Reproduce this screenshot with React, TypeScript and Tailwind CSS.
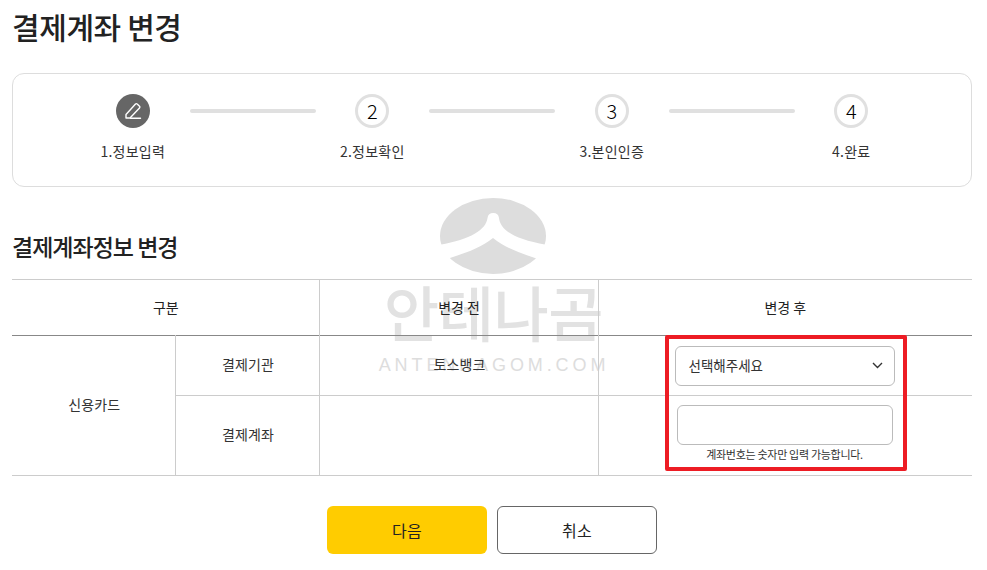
import React from "react";

const steps = [
  { n: "2", label: "2.정보확인" },
  { n: "3", label: "3.본인인증" },
  { n: "4", label: "4.완료" },
];

function Pencil() {
  return (
    <svg width="18" height="18" viewBox="0 0 18 18" fill="none" stroke="#ffffff" strokeWidth="1.4" strokeLinejoin="round" strokeLinecap="round">
      <path d="M2 12.5 L11.5 2 a1.2 1.2 0 0 1 1.7 0 L15.5 4.2 a1.2 1.2 0 0 1 0 1.7 L6 16 L2 16 Z" />
      <path d="M6.5 16.2 L16.5 16.2" />
    </svg>
  );
}

function Circle({ children, active }: { children: React.ReactNode; active?: boolean }) {
  return (
    <div
      className={
        active
          ? "flex h-[34px] w-[34px] items-center justify-center rounded-full bg-[#666666]"
          : "flex h-[34px] w-[34px] items-center justify-center rounded-full border-[3px] border-[#e0e0e0] bg-white text-[20px] font-light leading-none text-[#000000]"
      }
    >
      {children}
    </div>
  );
}

function Step({ circle, label, line }: { circle: React.ReactNode; label: string; line: boolean }) {
  return (
    <div className="relative flex flex-col items-center">
      {circle}
      {line && <div className="absolute left-[176.6px] top-[15px] h-[4px] w-[126px] rounded-full bg-[#e0e0e0]" />}
      <div className="mt-[13px] text-[14px] leading-[20px] tracking-[0.25px] text-[#333333]">{label}</div>
    </div>
  );
}

export default function App() {
  const th = "border-r border-[#cccccc] pb-[1px] pl-[1px] font-normal text-center text-[14px] text-[#222222]";
  const td = "border-r border-[#cccccc] pb-[2px] pl-[2px] text-center text-[14px] tracking-[0.1px] text-[#333333]";
  return (
    <div
      className="relative h-[570px] w-[987px] overflow-hidden bg-white"
      style={{ fontFamily: '"Noto Sans CJK KR", "Noto Sans", sans-serif' }}
    >
      <div className="absolute left-[378px] top-[198px] flex w-[230px] flex-col items-center">
        <svg width="106" height="76" viewBox="0 0 106 76">
          <ellipse cx="53" cy="38" rx="53" ry="38" fill="#dddddd" />
          <path
            d="M47.5 20 a5.8 5.8 0 0 1 11.5 0 C60 32 75 42 108 47 L108 66 L95 60 C80 55 65 50 53 40 C41 50 25 55 10 60 L-2 66 L-2 47 C30 42 46 32 47.5 20 Z"
            fill="#ffffff"
          />
        </svg>
        <div className="-mt-[1px] ml-[1px] whitespace-nowrap text-[60px] font-medium leading-[76px] tracking-[-0.5px] text-[#e2e2e2]">안테나곰</div>
        <div
          className="ml-[2px] mt-[6px] whitespace-nowrap text-[18px] leading-[20px] tracking-[3.9px] text-[#dddddd]"
          style={{ fontFamily: '"Liberation Sans", sans-serif' }}
        >
          ANTENNAGOM.COM
        </div>
      </div>

      <div className="relative ml-[12px] w-[960px]">
        <h1 className="pt-[4px] text-[30px] font-medium leading-[44px] tracking-[-0.4px] text-[#222222]">결제계좌 변경</h1>

        <div className="mt-[25px] grid h-[114px] grid-cols-4 rounded-[12px] border border-[#dddddd] pt-[20px]">
          <Step circle={<Circle active><Pencil /></Circle>} label="1.정보입력" line />
          {steps.map((s, i) => (
            <Step key={s.n} circle={<Circle>{s.n}</Circle>} label={s.label} line={i < 2} />
          ))}
        </div>

        <h2 className="mt-[42px] text-[23px] font-medium leading-[34px] tracking-[-1px] text-[#222222]">결제계좌정보 변경</h2>

        <table className="mt-[16px] w-[960px] table-fixed border-collapse border-y border-y-[#cccccc]">
          <colgroup>
            <col className="w-[163px]" />
            <col className="w-[144px]" />
            <col className="w-[279px]" />
            <col className="w-[374px]" />
          </colgroup>
          <thead>
            <tr className="h-[56px] border-b border-b-[#888888]">
              <th colSpan={2} className={th}>구분</th>
              <th className={th}>변경 전</th>
              <th className="pb-[1px] text-center text-[14px] font-normal text-[#222222]">변경 후</th>
            </tr>
          </thead>
          <tbody>
            <tr className="h-[60px] border-b border-b-[#cccccc]">
              <td rowSpan={2} className={td}>신용카드</td>
              <td className={td}>결제기관</td>
              <td className={td}>토스뱅크</td>
              <td>
                <div className="ml-[76px] flex h-[40px] w-[220px] items-center justify-between rounded-[6px] border border-[#bbbbbb] bg-white pl-[13px] pr-[11px] text-[13.5px] text-[#333333]">
                  <span>선택해주세요</span>
                  <svg width="11" height="7" viewBox="0 0 11 7" fill="none" stroke="#333333" strokeWidth="1.4">
                    <path d="M1 1 L5.5 5.5 L10 1" />
                  </svg>
                </div>
              </td>
            </tr>
            <tr className="h-[80px]">
              <td className={td}>결제계좌</td>
              <td className={td}></td>
              <td className="align-top">
                <div className="ml-[78px] mt-[9px] h-[40px] w-[216px] rounded-[6px] border border-[#bbbbbb] bg-white" />
                <div className="ml-[78px] mt-[1px] w-[216px] text-center text-[11px] leading-[16px] tracking-[-0.3px] text-[#333333]">
                  계좌번호는 숫자만 입력 가능합니다.
                </div>
              </td>
            </tr>
          </tbody>
        </table>

        <div className="mt-[30px] flex justify-center gap-[10px]">
          <button className="h-[48px] w-[160px] rounded-[6px] bg-[#ffcc00] text-[16px] tracking-[0.3px] text-[#222222]">다음</button>
          <button className="h-[48px] w-[160px] rounded-[6px] border border-[#666666] bg-white text-[16px] tracking-[0.3px] text-[#222222]">취소</button>
        </div>
      </div>

      <div className="absolute left-[665px] top-[335px] h-[136px] w-[242px] rounded-[2px] border-[4px] border-[#ed1c24]" />
    </div>
  );
}
